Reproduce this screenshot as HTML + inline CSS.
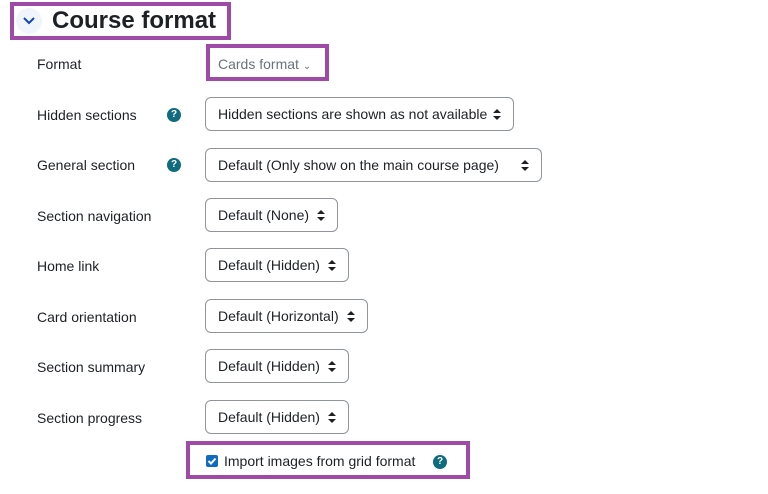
<!DOCTYPE html>
<html><head><style>
body{margin:0;width:768px;height:494px;background:#fff;font-family:"Liberation Sans",sans-serif;color:#1d2125;position:relative;overflow:hidden}
.abs{position:absolute}
.box{position:absolute;border:4px solid #a04aa8;box-sizing:border-box}
.lbl{position:absolute;left:37px;font-size:14px}
.sel{position:absolute;left:205px;height:34px;border:1px solid #8f959e;border-radius:6px;box-sizing:border-box;font-size:14px;line-height:32px;padding-left:12px;color:#1d2125}
.sel:after{content:"";position:absolute;right:12px;top:11px;border-left:4px solid transparent;border-right:4px solid transparent;border-bottom:4px solid #1d2125}
.sel:before{content:"";position:absolute;right:12px;top:18px;border-left:4px solid transparent;border-right:4px solid transparent;border-top:4px solid #1d2125}
.help{position:absolute;width:14px;height:14px;border-radius:50%;background:#0f6c7f;color:#fff;font-size:10px;font-weight:bold;text-align:center;line-height:14px}
</style></head><body>
<div class="box" style="left:10px;top:2px;width:221px;height:38px"></div>
<div class="abs" style="left:16px;top:8px;width:26px;height:26px;border-radius:50%;background:#f0f4fb"></div>
<svg class="abs" style="left:23px;top:16px" width="12" height="10"><path d="M1 2 L6 7 L11 2" stroke="#0f47ad" stroke-width="2" fill="none"/></svg>
<div class="abs" style="left:52px;top:6px;font-size:24px;font-weight:bold;line-height:30px">Course format</div>

<div class="box" style="left:206px;top:44px;width:123px;height:37px"></div>
<div class="lbl" style="top:56px">Format</div>
<div class="abs" style="left:218px;top:56px;font-size:14px;color:#6a737b">Cards format <span style="font-size:10px">&#8964;</span></div>

<div class="lbl" style="top:107px">Hidden sections</div>
<div class="help" style="left:167px;top:108px">?</div>
<div class="sel" style="top:97px;width:309px">Hidden sections are shown as not available</div>

<div class="lbl" style="top:157px">General section</div>
<div class="help" style="left:167px;top:158px">?</div>
<div class="sel" style="top:148px;width:337px">Default (Only show on the main course page)</div>

<div class="lbl" style="top:208px">Section navigation</div>
<div class="sel" style="top:198px;width:133px">Default (None)</div>

<div class="lbl" style="top:258px">Home link</div>
<div class="sel" style="top:248px;width:144px">Default (Hidden)</div>

<div class="lbl" style="top:309px">Card orientation</div>
<div class="sel" style="top:299px;width:163px">Default (Horizontal)</div>

<div class="lbl" style="top:359px">Section summary</div>
<div class="sel" style="top:349px;width:144px">Default (Hidden)</div>

<div class="lbl" style="top:410px">Section progress</div>
<div class="sel" style="top:400px;width:144px">Default (Hidden)</div>

<div class="box" style="left:186px;top:441px;width:284px;height:38px"></div>
<div class="abs" style="left:206px;top:455px;width:12px;height:12px;background:#0f6cbf;border-radius:2px"></div>
<svg class="abs" style="left:206px;top:455px" width="12" height="12"><path d="M2.5 6 L5 8.5 L9.5 3.5" stroke="#fff" stroke-width="2" fill="none"/></svg>
<div class="abs" style="left:224px;top:453px;font-size:14px">Import images from grid format</div>
<div class="help" style="left:433px;top:455px">?</div>
</body></html>
